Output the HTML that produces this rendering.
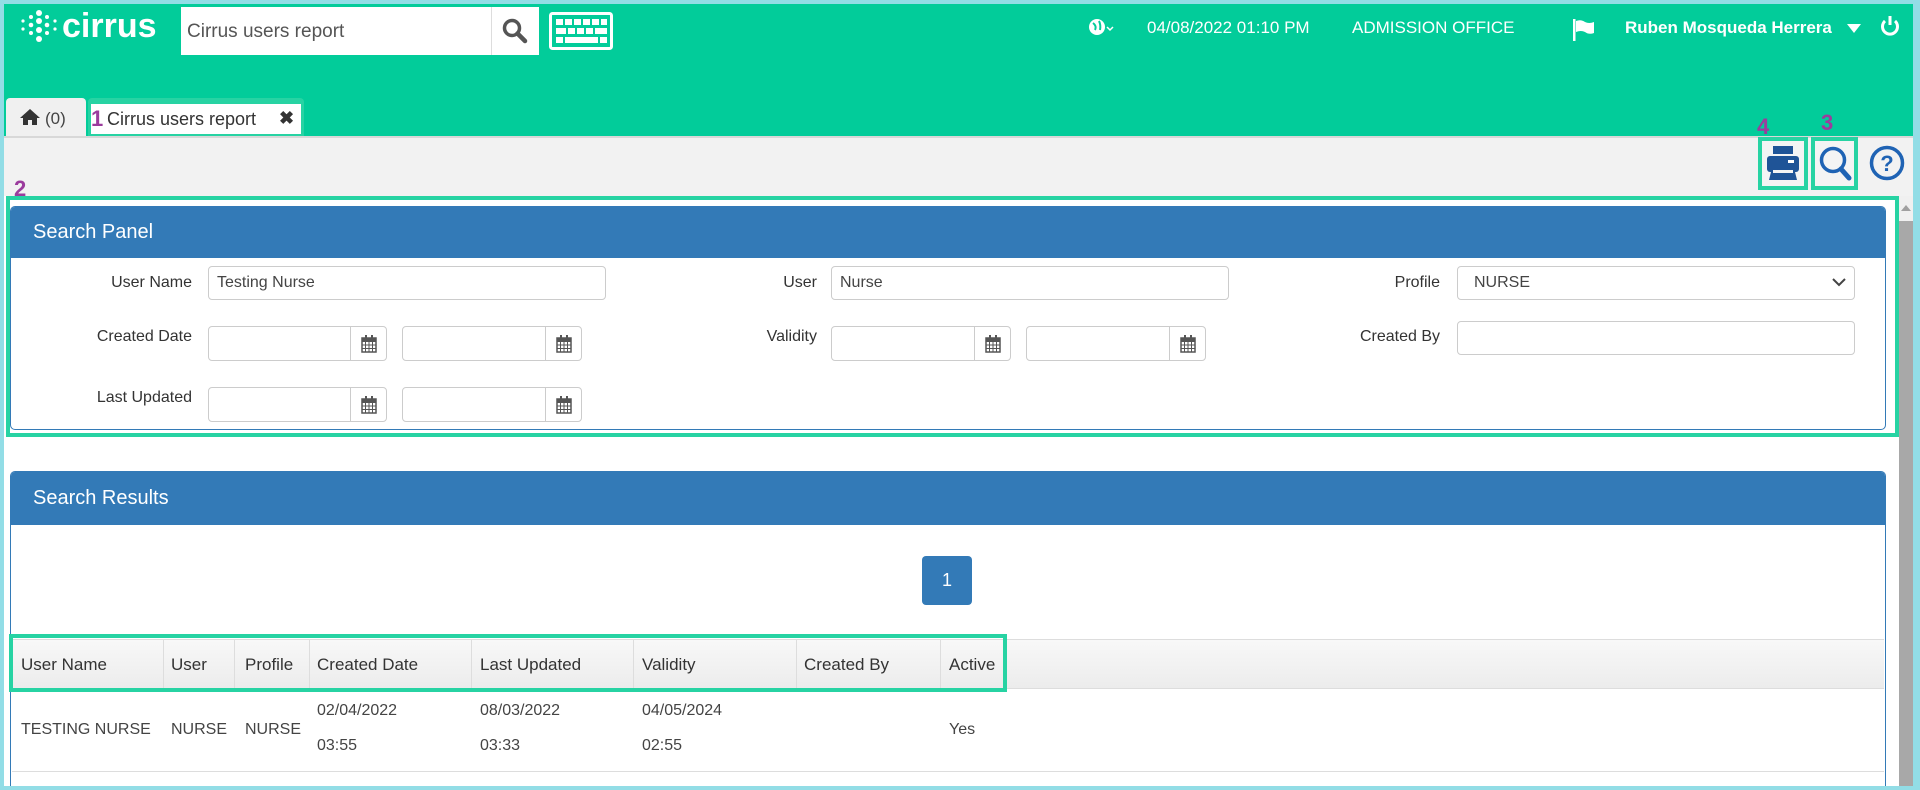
<!DOCTYPE html>
<html style="overflow:hidden;height:790px"><head><meta charset="utf-8"><style>
*{box-sizing:border-box;margin:0;padding:0}
body{width:1920px;height:790px;overflow:hidden;background:#fff;font-family:"Liberation Sans",sans-serif;position:relative;color:#333}
.a{position:absolute}
.hdr{left:0;top:0;width:1920px;height:136px;background:#02cc9a}
.gray{left:0;top:136px;width:1920px;height:60px;background:#f2f2f2;border-top:2px solid #d8d8d8}
.frame{left:0;top:0;width:1920px;height:790px;border:4px solid #92dde6;border-right-width:7px;pointer-events:none}
.wt{color:#fff;font-size:17px}
.lbl{font-size:16px;color:#333;text-align:right;width:180px}
.inp{background:#fff;border:1px solid #ccc;border-radius:4px;font-size:16px;color:#444;padding:0 8px;display:flex;align-items:center}
.cal{position:absolute;right:0;top:0;bottom:0;width:36px;border-left:1px solid #ccc;display:flex;align-items:center;justify-content:center}
.hl{border:4px solid #27d3a3}
.ph{background:#337ab7;color:#fff;font-size:20px;padding-left:22px;display:flex;align-items:center}
.th{font-size:17px;color:#333;font-weight:normal}
.td{font-size:16px;color:#444}
.pur{color:#9b3c9d;font-size:20px;font-weight:bold}
</style></head><body>
<div class="a hdr"></div>
<svg class="a" style="left:18px;top:10px" width="42" height="32" viewBox="0 0 42 32"><g fill="#fff"><circle cx="21" cy="3" r="3"/><circle cx="21" cy="11" r="3"/><circle cx="21" cy="20" r="3"/><circle cx="21" cy="29" r="3"/><circle cx="13" cy="7" r="2"/><circle cx="29" cy="7" r="2"/><circle cx="13" cy="15" r="2.3"/><circle cx="29" cy="15" r="2.3"/><circle cx="13" cy="23" r="2"/><circle cx="29" cy="23" r="2"/><circle cx="5" cy="11" r="1.6"/><circle cx="37" cy="11" r="1.6"/><circle cx="5" cy="19" r="1.6"/><circle cx="37" cy="19" r="1.6"/></g></svg>
<div class="a" style="left:62px;top:7px;color:#fff;font-size:34px;font-weight:bold">cirrus</div>
<div class="a" style="left:181px;top:7px;width:310px;height:48px;background:#fff;font-size:19px;color:#555;padding-left:6px;line-height:50px">Cirrus users report</div>
<div class="a" style="left:491px;top:7px;width:48px;height:48px;background:#fff;border-left:1px solid #ddd"></div>
<svg class="a" style="left:502px;top:18px" width="26" height="26" viewBox="0 0 26 26"><circle cx="10" cy="10" r="7.5" fill="none" stroke="#555" stroke-width="3.5"/><path d="M15.5 15.5 L23 23" stroke="#555" stroke-width="4.5" stroke-linecap="round"/></svg>
<svg class="a" style="left:549px;top:12px" width="64" height="38" viewBox="0 0 64 38"><rect x="1.5" y="1.5" width="61" height="35" rx="2" fill="none" stroke="#fff" stroke-width="3"/><g fill="#fff"><rect x="7" y="7" width="7" height="6"/><rect x="16" y="7" width="7" height="6"/><rect x="25" y="7" width="7" height="6"/><rect x="34" y="7" width="7" height="6"/><rect x="43" y="7" width="7" height="6"/><rect x="52" y="7" width="6" height="6"/><rect x="7" y="16" width="10" height="6"/><rect x="19" y="16" width="7" height="6"/><rect x="28" y="16" width="7" height="6"/><rect x="37" y="16" width="7" height="6"/><rect x="46" y="16" width="12" height="6"/><rect x="7" y="25" width="7" height="6"/><rect x="16" y="25" width="33" height="6"/><rect x="51" y="25" width="7" height="6"/></g></svg>
<svg class="a" style="left:1089px;top:18px" width="30" height="18" viewBox="0 0 30 18"><circle cx="8" cy="9" r="8" fill="#fff"/><path d="M4 5 Q8 8 6 12 M10 3 Q12 7 11 12" stroke="#02cc9a" stroke-width="2" fill="none"/><path d="M18 9 L21 12 L24 9" stroke="#fff" stroke-width="1.5" fill="none"/></svg>
<div class="a wt" style="left:1147px;top:18px">04/08/2022 01:10 PM</div>
<div class="a wt" style="left:1352px;top:18px">ADMISSION OFFICE</div>
<svg class="a" style="left:1572px;top:18px" width="24" height="24" viewBox="0 0 24 24"><rect x="1" y="1" width="2.5" height="22" fill="#fff"/><path d="M4 3 Q9 1 13 4 Q17 6 22 4 L22 15 Q17 17 13 14 Q9 12 4 14Z" fill="#fff"/></svg>
<div class="a wt" style="left:1625px;top:18px;font-weight:bold">Ruben Mosqueda Herrera</div>
<svg class="a" style="left:1847px;top:24px" width="14" height="10"><path d="M0 0 H14 L7 9Z" fill="#fff"/></svg>
<svg class="a" style="left:1880px;top:15px" width="20" height="22" viewBox="0 0 20 22"><path d="M5 6 A7.5 7.5 0 1 0 15 6" stroke="#fff" stroke-width="3" fill="none"/><path d="M10 1 V10" stroke="#fff" stroke-width="3"/></svg>
<div class="a" style="left:6px;top:98px;width:80px;height:38px;background:#f0f0f0;border-radius:4px 4px 0 0"></div>
<svg class="a" style="left:19px;top:108px" width="22" height="18" viewBox="0 0 22 18"><path d="M11 1 L21 10 L18 10 L18 17 L13 17 L13 12 L9 12 L9 17 L4 17 L4 10 L1 10Z" fill="#333"/></svg>
<div class="a" style="left:45px;top:109px;font-size:17px;color:#444">(0)</div>
<div class="a" style="left:88px;top:98px;width:216px;height:38px;background:#27d3a3;border-radius:4px 4px 0 0"></div>
<div class="a" style="left:91px;top:104px;width:210px;height:30px;background:#fff"></div>
<div class="a pur" style="left:91px;top:106px;font-size:22px">1</div>
<div class="a" style="left:107px;top:109px;font-size:18px;color:#333">Cirrus users report</div>
<div class="a" style="left:279px;top:108px;font-size:18px;font-weight:bold;color:#333">✖</div>
<div class="a gray"></div>
<div class="a pur" style="left:1757px;top:114px;font-size:22px">4</div>
<div class="a pur" style="left:1821px;top:110px;font-size:22px">3</div>
<div class="a hl" style="left:1758px;top:137px;width:50px;height:53px;background:#f4f4f4"></div>
<svg class="a" style="left:1767px;top:146px" width="32" height="36" viewBox="0 0 32 36"><rect x="6" y="0" width="20" height="8" fill="#1f5497"/><rect x="0" y="10" width="32" height="16" rx="3" fill="#1f5497"/><rect x="21" y="14" width="6" height="3" fill="#fff"/><path d="M4 26 H28 L30 34 H2Z" fill="#1f5497"/><rect x="6" y="24" width="20" height="3" fill="#f4f4f4"/></svg>
<div class="a hl" style="left:1811px;top:137px;width:47px;height:53px;background:#f4f4f4"></div>
<svg class="a" style="left:1819px;top:146px" width="34" height="36" viewBox="0 0 34 36"><circle cx="14" cy="14" r="11.5" fill="none" stroke="#1f63b4" stroke-width="3.5"/><path d="M22 23 L30 32" stroke="#1f63b4" stroke-width="5" stroke-linecap="round"/></svg>
<svg class="a" style="left:1869px;top:145px" width="36" height="36" viewBox="0 0 36 36"><circle cx="18" cy="18" r="15.5" fill="none" stroke="#1f63b4" stroke-width="3.5"/><text x="18" y="26" text-anchor="middle" font-family="Liberation Sans" font-weight="bold" font-size="22" fill="#1f63b4">?</text></svg>
<div class="a pur" style="left:14px;top:176px;font-size:22px">2</div>
<div class="a" style="left:1899px;top:196px;width:14px;height:594px;background:#f0f0f0"></div>
<div class="a" style="left:1899px;top:221px;width:14px;height:569px;background:#a8a8a8"></div>
<svg class="a" style="left:1900px;top:204px" width="12" height="8"><path d="M1 7 L6 1 L11 7Z" fill="#a0a0a0"/></svg>
<div class="a hl" style="left:6px;top:196px;width:1893px;height:241px"></div>
<div class="a" style="left:10px;top:206px;width:1876px;height:224px;border:1px solid #337ab7;border-radius:5px;overflow:hidden">
 <div class="ph" style="height:51px">Search Panel</div>
</div>
<div class="a lbl" style="left:12px;top:274px">User Name</div>
<div class="a inp" style="left:208px;top:266px;width:398px;height:34px">Testing Nurse</div>
<div class="a lbl" style="left:637px;top:274px">User</div>
<div class="a inp" style="left:831px;top:266px;width:398px;height:34px">Nurse</div>
<div class="a lbl" style="left:1260px;top:274px">Profile</div>
<div class="a inp" style="left:1457px;top:266px;width:398px;height:34px;padding-left:16px">NURSE</div>
<svg class="a" style="left:1832px;top:277px" width="14" height="10"><path d="M1 2 L7 8 L13 2" stroke="#444" stroke-width="2" fill="none"/></svg>
<div class="a lbl" style="left:12px;top:328px">Created Date</div>
<div class="a lbl" style="left:637px;top:328px">Validity</div>
<div class="a lbl" style="left:1260px;top:328px">Created By</div>
<div class="a inp" style="left:1457px;top:321px;width:398px;height:34px"></div>
<div class="a lbl" style="left:12px;top:389px">Last Updated</div>
<div class="a inp" style="left:208px;top:326px;width:179px;height:35px"><div class="cal"><svg width="16" height="18" viewBox="0 0 16 18"><rect x="1" y="3" width="14" height="14" fill="none" stroke="#555" stroke-width="1.5"/><rect x="1" y="3" width="14" height="4" fill="#555"/><path d="M1 10H15M1 13.5H15M4.5 7V17M8 7V17M11.5 7V17" stroke="#555"/><rect x="4" y="0" width="2" height="4" fill="#555"/><rect x="10" y="0" width="2" height="4" fill="#555"/></svg></div></div>
<div class="a inp" style="left:402px;top:326px;width:180px;height:35px"><div class="cal"><svg width="16" height="18" viewBox="0 0 16 18"><rect x="1" y="3" width="14" height="14" fill="none" stroke="#555" stroke-width="1.5"/><rect x="1" y="3" width="14" height="4" fill="#555"/><path d="M1 10H15M1 13.5H15M4.5 7V17M8 7V17M11.5 7V17" stroke="#555"/><rect x="4" y="0" width="2" height="4" fill="#555"/><rect x="10" y="0" width="2" height="4" fill="#555"/></svg></div></div>
<div class="a inp" style="left:831px;top:326px;width:180px;height:35px"><div class="cal"><svg width="16" height="18" viewBox="0 0 16 18"><rect x="1" y="3" width="14" height="14" fill="none" stroke="#555" stroke-width="1.5"/><rect x="1" y="3" width="14" height="4" fill="#555"/><path d="M1 10H15M1 13.5H15M4.5 7V17M8 7V17M11.5 7V17" stroke="#555"/><rect x="4" y="0" width="2" height="4" fill="#555"/><rect x="10" y="0" width="2" height="4" fill="#555"/></svg></div></div>
<div class="a inp" style="left:1026px;top:326px;width:180px;height:35px"><div class="cal"><svg width="16" height="18" viewBox="0 0 16 18"><rect x="1" y="3" width="14" height="14" fill="none" stroke="#555" stroke-width="1.5"/><rect x="1" y="3" width="14" height="4" fill="#555"/><path d="M1 10H15M1 13.5H15M4.5 7V17M8 7V17M11.5 7V17" stroke="#555"/><rect x="4" y="0" width="2" height="4" fill="#555"/><rect x="10" y="0" width="2" height="4" fill="#555"/></svg></div></div>
<div class="a inp" style="left:208px;top:387px;width:179px;height:35px"><div class="cal"><svg width="16" height="18" viewBox="0 0 16 18"><rect x="1" y="3" width="14" height="14" fill="none" stroke="#555" stroke-width="1.5"/><rect x="1" y="3" width="14" height="4" fill="#555"/><path d="M1 10H15M1 13.5H15M4.5 7V17M8 7V17M11.5 7V17" stroke="#555"/><rect x="4" y="0" width="2" height="4" fill="#555"/><rect x="10" y="0" width="2" height="4" fill="#555"/></svg></div></div>
<div class="a inp" style="left:402px;top:387px;width:180px;height:35px"><div class="cal"><svg width="16" height="18" viewBox="0 0 16 18"><rect x="1" y="3" width="14" height="14" fill="none" stroke="#555" stroke-width="1.5"/><rect x="1" y="3" width="14" height="4" fill="#555"/><path d="M1 10H15M1 13.5H15M4.5 7V17M8 7V17M11.5 7V17" stroke="#555"/><rect x="4" y="0" width="2" height="4" fill="#555"/><rect x="10" y="0" width="2" height="4" fill="#555"/></svg></div></div>
<div class="a" style="left:10px;top:471px;width:1876px;height:319px;border:1px solid #337ab7;border-bottom:none;border-radius:5px 5px 0 0;overflow:hidden">
 <div class="ph" style="height:53px">Search Results</div>
</div>
<div class="a" style="left:922px;top:556px;width:50px;height:49px;background:#337ab7;border-radius:4px;color:#fff;font-size:18px;text-align:center;line-height:49px">1</div>
<div class="a" style="left:12px;top:639px;width:1872px;height:50px;background:linear-gradient(#f8f8f8,#ececec);border-top:1px solid #ddd;border-bottom:1px solid #ddd"></div>
<div class="a" style="left:12px;top:771px;width:1872px;height:1px;background:#ddd"></div>
<div class="a" style="left:163px;top:639px;width:1px;height:50px;background:#ddd"></div>
<div class="a" style="left:234px;top:639px;width:1px;height:50px;background:#ddd"></div>
<div class="a" style="left:309px;top:639px;width:1px;height:50px;background:#ddd"></div>
<div class="a" style="left:471px;top:639px;width:1px;height:50px;background:#ddd"></div>
<div class="a" style="left:633px;top:639px;width:1px;height:50px;background:#ddd"></div>
<div class="a" style="left:796px;top:639px;width:1px;height:50px;background:#ddd"></div>
<div class="a" style="left:940px;top:639px;width:1px;height:50px;background:#ddd"></div>
<div class="a" style="left:1006px;top:639px;width:1px;height:50px;background:#ddd"></div>
<div class="a hl" style="left:9px;top:634px;width:998px;height:58px"></div>
<div class="a th" style="left:21px;top:655px">User Name</div>
<div class="a th" style="left:171px;top:655px">User</div>
<div class="a th" style="left:245px;top:655px">Profile</div>
<div class="a th" style="left:317px;top:655px">Created Date</div>
<div class="a th" style="left:480px;top:655px">Last Updated</div>
<div class="a th" style="left:642px;top:655px">Validity</div>
<div class="a th" style="left:804px;top:655px">Created By</div>
<div class="a th" style="left:949px;top:655px">Active</div>
<div class="a td" style="left:21px;top:721px">TESTING NURSE</div>
<div class="a td" style="left:171px;top:721px">NURSE</div>
<div class="a td" style="left:245px;top:721px">NURSE</div>
<div class="a td" style="left:317px;top:702px">02/04/2022</div>
<div class="a td" style="left:317px;top:737px">03:55</div>
<div class="a td" style="left:480px;top:702px">08/03/2022</div>
<div class="a td" style="left:480px;top:737px">03:33</div>
<div class="a td" style="left:642px;top:702px">04/05/2024</div>
<div class="a td" style="left:642px;top:737px">02:55</div>
<div class="a td" style="left:949px;top:721px">Yes</div>
<div class="a frame"></div>
</body></html>
